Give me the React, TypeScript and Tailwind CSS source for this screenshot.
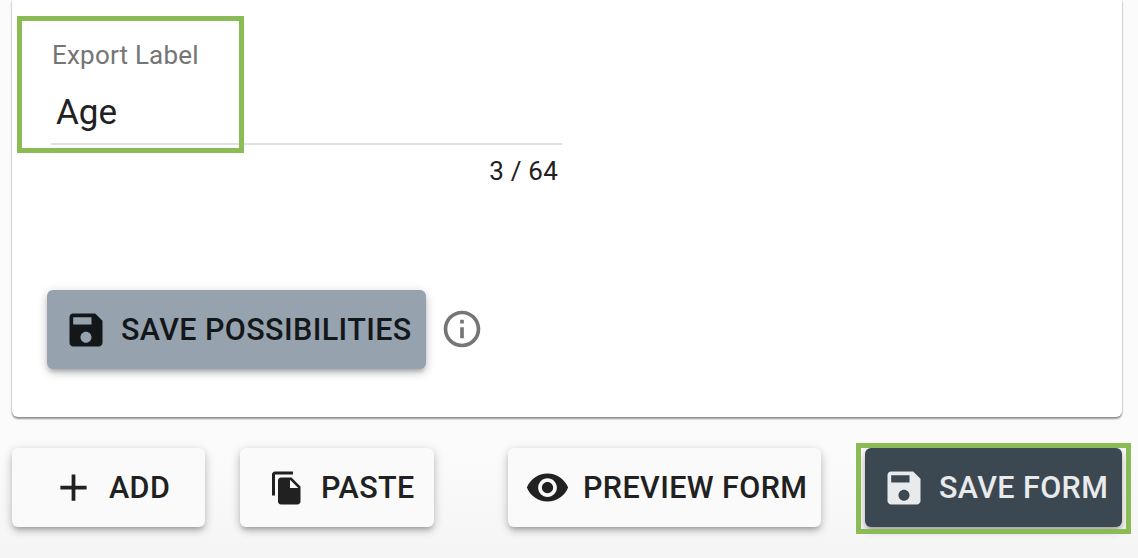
const SAVE_PATH = 'M17 3H5c-1.11 0-2 .9-2 2v14c0 1.1.89 2 2 2h14c1.1 0 2-.9 2-2V7l-4-4zm-5 16c-1.66 0-3-1.34-3-3s1.34-3 3-3 3 1.34 3 3-1.34 3-3 3zm3-10H5V5h10v4z';
const ADD_PATH = 'M19 13h-6v6h-2v-6H5v-2h6V5h2v6h6v2z';
const COPY_PATH = 'M16 1H4c-1.1 0-2 .9-2 2v14h2V3h12V1zm-1 4l6 6v10c0 1.1-.9 2-2 2H7.99C6.89 23 6 22.1 6 21l.01-14c0-1.1.89-2 1.99-2h7zm-1 7h5.5L14 6.5V12z';
const EYE_PATH = 'M12 4.5C7 4.5 2.73 7.61 1 12c1.73 4.39 6 7.5 11 7.5s9.27-3.11 11-7.5c-1.73-4.39-6-7.5-11-7.5zM12 17c-2.76 0-5-2.24-5-5s2.24-5 5-5 5 2.24 5 5-2.24 5-5 5zm0-8c-1.66 0-3 1.34-3 3s1.34 3 3 3 3-1.34 3-3-1.34-3-3-3z';
const INFO_PATH = 'M11 7h2v2h-2zm0 4h2v6h-2zm1-9C6.48 2 2 6.48 2 12s4.48 10 10 10 10-4.48 10-10S17.52 2 12 2zm0 18c-4.41 0-8-3.59-8-8s3.59-8 8-8 8 3.59 8 8-3.59 8-8 8z';

function Icon({ d, className }: { d: string; className: string }) {
  return (
    <svg viewBox="0 0 24 24" fill="currentColor" className={className}>
      <path d={d} />
    </svg>
  );
}

const BUTTON_SHADOW = 'shadow-[0_4px_4px_-2px_rgba(0,0,0,0.2),0_4px_8px_0_rgba(0,0,0,0.14),0_2px_12px_0_rgba(0,0,0,0.12)]';
const BUTTON_TEXT = 'text-[30.5px] font-medium tracking-[0.4px]';

function LightButton({ d, label, className, iconClass = 'w-[45px] h-[45px]' }: { d: string; label: string; className: string; iconClass?: string }) {
  return (
    <button className={`h-[79px] flex items-center bg-[#fafafa] text-[#212121] rounded-[6px] ${BUTTON_TEXT} ${BUTTON_SHADOW} ${className}`}>
      <Icon d={d} className={`shrink-0 ${iconClass}`} />
      <span>{label}</span>
    </button>
  );
}

export default function App() {
  return (
    <div className="relative w-[1138px] h-[558px] overflow-hidden bg-gradient-to-b from-[#fbfbfb] from-80% to-[#f5f5f5] font-['Roboto',sans-serif]">
      {/* Form card */}
      <div className="ml-[12px] w-[1110px] h-[417px] bg-white rounded-b-[6px] shadow-[0_2px_2px_rgba(0,0,0,0.4),0_0_2px_rgba(0,0,0,0.2)] pl-[39px] pt-[41px] flex flex-col">
        <div className="w-[511px] h-[104px] border-b-2 border-[#e0e0e0] pl-[1px]">
          <div className="-mt-[1px] text-[26px] leading-[30px] text-[#757575] tracking-[0.2px]">Export Label</div>
          <div className="mt-[23px] pl-[4px] text-[35px] leading-[40px] text-[#212121]">Age</div>
        </div>
        <div className="w-[507px] mt-[11px] text-right text-[26px] leading-[30px] text-[#212121] tracking-[0.2px]">3 / 64</div>
        <div className="mt-[104px] -ml-[4px] flex items-center">
          <button className={`w-[379px] h-[79px] pl-[17px] gap-[13px] flex items-center bg-[#96a3af] text-[#14171a] rounded-[6px] ${BUTTON_TEXT} ${BUTTON_SHADOW}`}>
            <Icon d={SAVE_PATH} className="w-[44px] h-[44px] shrink-0" />
            <span>SAVE POSSIBILITIES</span>
          </button>
          <Icon d={INFO_PATH} className="ml-[14px] -mt-[2px] w-[44px] h-[44px] text-[#757575]" />
        </div>
      </div>

      {/* Action row */}
      <div className="mt-[31px] ml-[12px] flex">
        <LightButton d={ADD_PATH} label="ADD" className="w-[193px] pl-[39px] gap-[13px]" />
        <LightButton d={COPY_PATH} label="PASTE" iconClass="w-[36px] h-[36px]" className="ml-[35px] w-[194px] pl-[29px] gap-[16px]" />
        <LightButton d={EYE_PATH} label="PREVIEW FORM" className="ml-[74px] w-[313px] pl-[17px] gap-[13px]" />
        <button className={`ml-[44px] w-[257px] h-[79px] pl-[17px] flex items-center gap-[13px] bg-[#3c4851] text-[#e8eaec] rounded-[6px] ${BUTTON_TEXT} ${BUTTON_SHADOW}`}>
          <Icon d={SAVE_PATH} className="w-[44px] h-[44px] shrink-0" />
          <span>SAVE FORM</span>
        </button>
      </div>

      {/* Green highlight boxes */}
      <div className="absolute left-[17px] top-[16px] w-[227px] h-[137px] border-[5px] border-[#8abb55]" />
      <div className="absolute left-[856px] top-[443px] w-[275px] h-[91px] border-[5px] border-[#8abb55]" />
    </div>
  );
}
